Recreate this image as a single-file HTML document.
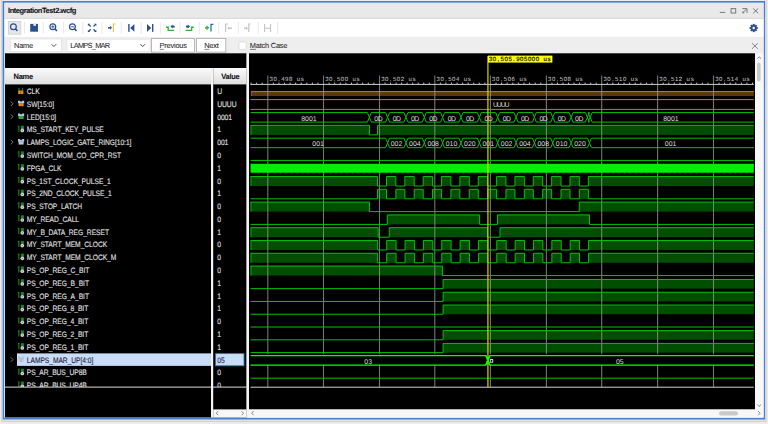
<!DOCTYPE html>
<html><head><meta charset="utf-8">
<style>
html,body{margin:0;padding:0;width:768px;height:424px;overflow:hidden;background:#d9d9d9;}
svg{position:absolute;left:0;top:0;}
text{font-family:"Liberation Sans",sans-serif;text-rendering:geometricPrecision;}
.nt{font-size:7.85px;letter-spacing:-0.05px;}
.wt{font-family:"Liberation Sans",sans-serif;font-size:6.9px;fill:#dcdcdc;}
.tl{font-family:"Liberation Sans",sans-serif;font-size:6px;fill:#d0d0d0;}
.us{font-size:5.4px;}
.ui{font-size:7.4px;fill:#2c2c2c;letter-spacing:-0.2px;stroke:#2c2c2c;stroke-width:0.08px;}
.hd{font-size:7.5px;font-weight:bold;fill:#15151f;letter-spacing:-0.32px;stroke:#15151f;stroke-width:0.1px;}
</style></head>
<body>
<svg width="768" height="424" viewBox="0 0 768 424">
<defs>
<linearGradient id="hg" x1="0" y1="0" x2="0" y2="1"><stop offset="0" stop-color="#fbfbfb"/><stop offset="1" stop-color="#dedede"/></linearGradient>
<clipPath id="nclip"><rect x="5" y="84.5" width="206" height="302.6"/></clipPath>
<clipPath id="vclip"><rect x="213" y="84.5" width="33.5" height="302.6"/></clipPath>
<clipPath id="wclip"><rect x="249" y="53" width="506" height="356.5"/></clipPath>
</defs>
<!-- outer bg strip line -->
<rect x="0" y="0" width="768" height="424" fill="#ebebeb"/>
<!-- frame -->
<path d="M1.9 0 V421.3 H766 V0" fill="none" stroke="#c6c6c6" stroke-width="0.9"/>
<rect x="3.6" y="1.95" width="760.5" height="416.65" fill="#f6f6f6" stroke="#4a80d4" stroke-width="1.9"/>
<!-- title bar -->
<rect x="4.3" y="2.7" width="759.5" height="15.8" fill="#e9e9e9"/>
<path d="M4.3 18.4 H764.3" stroke="#d2d2d2" stroke-width="0.8"/>
<text x="8" y="13.4" class="hd" style="fill:#141414;letter-spacing:-0.43px">IntegrationTest2.wcfg</text>
<!-- window controls -->
<path d="M719.8 12.4 H725.2" stroke="#7a7a7a" stroke-width="1"/>
<rect x="731.1" y="8.6" width="4.6" height="4.4" fill="none" stroke="#7a7a7a" stroke-width="1"/>
<path d="M742.4 8.6 H747 V13" fill="none" stroke="#7a7a7a" stroke-width="1"/><path d="M746.4 9.2 L743.6 12" stroke="#7a7a7a" stroke-width="1"/><path d="M742.2 13.4 L742.6 10.9 L744.7 13 Z" fill="#7a7a7a"/>
<path d="M753.2 8.5 L758.2 13.2 M758.2 8.5 L753.2 13.2" stroke="#7a7a7a" stroke-width="1"/>
<!-- toolbar -->
<rect x="4.3" y="19" width="759.5" height="17.9" fill="#ffffff"/>
<rect x="8.4" y="21.4" width="12.4" height="12.8" fill="#e6e6e6" stroke="#cacaca" stroke-width="0.7"/>
<circle cx="13.40" cy="26.80" r="2.9" fill="none" stroke="#2c4f8e" stroke-width="1.2"/><path d="M15.40 28.80 L17.50 30.90" stroke="#2c4f8e" stroke-width="1.5"/>
<path d="M24.5 22 V33.5" stroke="#e2e2e2" stroke-width="0.8"/>
<path d="M43.2 22 V33.5" stroke="#e2e2e2" stroke-width="0.8"/>
<path d="M63.6 22 V33.5" stroke="#e2e2e2" stroke-width="0.8"/>
<path d="M82.8 22 V33.5" stroke="#e2e2e2" stroke-width="0.8"/>
<path d="M102 22 V33.5" stroke="#e2e2e2" stroke-width="0.8"/>
<path d="M121.3 22 V33.5" stroke="#e2e2e2" stroke-width="0.8"/>
<path d="M141.1 22 V33.5" stroke="#e2e2e2" stroke-width="0.8"/>
<path d="M160.3 22 V33.5" stroke="#e2e2e2" stroke-width="0.8"/>
<path d="M180.1 22 V33.5" stroke="#e2e2e2" stroke-width="0.8"/>
<path d="M199.4 22 V33.5" stroke="#e2e2e2" stroke-width="0.8"/>
<path d="M218.7 22 V33.5" stroke="#e2e2e2" stroke-width="0.8"/>
<path d="M238.4 22 V33.5" stroke="#e2e2e2" stroke-width="0.8"/>
<path d="M258.2 22 V33.5" stroke="#e2e2e2" stroke-width="0.8"/>
<path d="M277.5 22 V33.5" stroke="#e2e2e2" stroke-width="0.8"/>
<path d="M30.2 23.9 H38 V31.7 H30.2 Z" fill="#2c4f8e"/><rect x="33.4" y="23.9" width="2.6" height="1.9" fill="#e8ecf4"/>
<circle cx="52.80" cy="26.80" r="2.9" fill="none" stroke="#2c4f8e" stroke-width="1.2"/><path d="M54.80 28.80 L56.90 30.90" stroke="#2c4f8e" stroke-width="1.5"/><path d="M51.20 26.80 H54.40 M52.80 25.20 V28.40" stroke="#2c4f8e" stroke-width="0.9"/>
<circle cx="72.40" cy="26.80" r="2.9" fill="none" stroke="#2c4f8e" stroke-width="1.2"/><path d="M74.40 28.80 L76.50 30.90" stroke="#2c4f8e" stroke-width="1.5"/><path d="M70.80 26.80 H74.00" stroke="#2c4f8e" stroke-width="0.9"/>
<path d="M88.3 24.099999999999998 l2.4 2.4 M95.89999999999999 24.099999999999998 l-2.4 2.4 M88.3 31.7 l2.4 -2.4 M95.89999999999999 31.7 l-2.4 -2.4" stroke="#2c4f8e" stroke-width="1.3"/><path d="M87.89999999999999 23.7 h2.2 l-2.2 2.2 z M96.3 23.7 h-2.2 l2.2 2.2 z M87.89999999999999 32.1 h2.2 l-2.2 -2.2 z M96.3 32.1 h-2.2 l2.2 -2.2 z" fill="#2c4f8e"/>
<path d="M108 27.8 H110.6" stroke="#2c4f8e" stroke-width="1.6"/><path d="M110.2 25.8 L112 27.8 L110.2 29.8 Z" fill="#2c4f8e"/><path d="M115.6 24 H113.4 V32" fill="none" stroke="#e8c840" stroke-width="1.2"/>
<rect x="128.2" y="24" width="1.4" height="7.8" fill="#2c4f8e"/><path d="M134.4 24 V31.8 L130.2 27.9 Z" fill="#2c4f8e"/>
<rect x="152" y="24" width="1.4" height="7.8" fill="#2c4f8e"/><path d="M147 24 V31.8 L151.2 27.9 Z" fill="#2c4f8e"/>
<path d="M166 27.2 H168.2 V30.4 H174.2" fill="none" stroke="#33b533" stroke-width="1.4"/><path d="M172 26.6 H174.6" stroke="#2c4f8e" stroke-width="2"/><path d="M172.6 24.6 L170.4 26.6 L172.6 28.6 Z" fill="#2c4f8e"/>
<path d="M185.6 30.4 H191.6 V27.2 H193.8" fill="none" stroke="#33b533" stroke-width="1.4"/><path d="M186 26.6 H188.4" stroke="#2c4f8e" stroke-width="2"/><path d="M187.8 24.6 L190 26.6 L187.8 28.6 Z" fill="#2c4f8e"/>
<path d="M205 27.8 H209 M207 25.8 V29.8" stroke="#33b533" stroke-width="1.4"/><path d="M213.4 24.4 H211 V31.6" fill="none" stroke="#2d6ab5" stroke-width="1.3"/>
<path d="M228 24 H225.6 V32" fill="none" stroke="#c4c4c4" stroke-width="1.2"/><path d="M228.4 28.2 H232" stroke="#c4c4c4" stroke-width="1.4"/><path d="M229.2 26.4 L227.4 28.2 L229.2 30 Z" fill="#c4c4c4"/>
<path d="M244 28.2 H246.6" stroke="#c4c4c4" stroke-width="1.4"/><path d="M246.2 26.4 L248 28.2 L246.2 30 Z" fill="#c4c4c4"/><path d="M250.6 24 H248.8 V32" fill="none" stroke="#c4c4c4" stroke-width="1.2"/>
<path d="M264.6 24 V32 M270.6 24 V32 M264.6 28.2 H270.6" fill="none" stroke="#c4c4c4" stroke-width="1.1"/>
<rect x="752.70" y="23.90" width="2" height="2.2" fill="#2c4f8e" transform="rotate(0 753.7 28)"/><rect x="752.70" y="23.90" width="2" height="2.2" fill="#2c4f8e" transform="rotate(45 753.7 28)"/><rect x="752.70" y="23.90" width="2" height="2.2" fill="#2c4f8e" transform="rotate(90 753.7 28)"/><rect x="752.70" y="23.90" width="2" height="2.2" fill="#2c4f8e" transform="rotate(135 753.7 28)"/><rect x="752.70" y="23.90" width="2" height="2.2" fill="#2c4f8e" transform="rotate(180 753.7 28)"/><rect x="752.70" y="23.90" width="2" height="2.2" fill="#2c4f8e" transform="rotate(225 753.7 28)"/><rect x="752.70" y="23.90" width="2" height="2.2" fill="#2c4f8e" transform="rotate(270 753.7 28)"/><rect x="752.70" y="23.90" width="2" height="2.2" fill="#2c4f8e" transform="rotate(315 753.7 28)"/><circle cx="753.7" cy="28" r="2.9" fill="#2c4f8e"/><circle cx="753.7" cy="28" r="1.2" fill="#fff"/>
<!-- search row -->
<rect x="4.3" y="36.9" width="759.5" height="16.4" fill="#eeeeee"/>
<rect x="10.2" y="39" width="51" height="12.6" fill="#fff" stroke="#dcdcdc" stroke-width="0.6"/>
<text x="14" y="48" class="ui">Name</text>
<path d="M51.6 44.2 L53.9 46.6 L56.2 44.2" fill="none" stroke="#505050" stroke-width="1"/>
<rect x="67" y="39.2" width="83" height="12.4" fill="#fff" stroke="#dcdcdc" stroke-width="0.6"/>
<text x="70.3" y="48" class="ui" style="letter-spacing:-0.72px">LAMPS_MAR</text>
<path d="M140.4 44.2 L142.7 46.6 L145 44.2" fill="none" stroke="#505050" stroke-width="1"/>
<rect x="151.5" y="38.5" width="43" height="13.6" fill="#fff" stroke="#a8a8a8" stroke-width="0.8"/>
<text x="159.6" y="48" class="ui">Previous</text><path d="M159.8 49.4 H163.8" stroke="#3a3a3a" stroke-width="0.6"/>
<rect x="196.4" y="38.5" width="29.4" height="13.6" fill="#fff" stroke="#a8a8a8" stroke-width="0.8"/>
<text x="204.2" y="48" class="ui">Next</text><path d="M204.4 49.4 H209.4" stroke="#3a3a3a" stroke-width="0.6"/>
<rect x="239" y="42" width="7.2" height="7.4" rx="0.8" fill="#fff" stroke="#cfcfcf" stroke-width="0.6"/>
<text x="249.8" y="48" class="ui">Match Case</text><path d="M250 49.4 H256" stroke="#3a3a3a" stroke-width="0.6"/>
<path d="M752 43.2 L757.8 48.8 M757.8 43.2 L752 48.8" stroke="#7a7a7a" stroke-width="0.9"/>
<!-- main area -->
<rect x="4.3" y="53.3" width="759.5" height="364.2" fill="#eaeaea"/>
<rect x="5" y="53.3" width="241.6" height="364.2" fill="#000"/>
<rect x="246.6" y="53.3" width="2.4" height="364.2" fill="#f4f4f4"/>
<rect x="211" y="68" width="2.2" height="349.5" fill="#f4f4f4"/>
<rect x="5" y="68" width="206" height="16.4" fill="url(#hg)"/>
<rect x="213.2" y="68" width="33.4" height="16.4" fill="url(#hg)"/>
<text x="13.6" y="79" class="hd">Name</text>
<text x="221.3" y="79" class="hd">Value</text>
<rect x="213.2" y="409.4" width="33.4" height="8.1" fill="#f7f7f7"/>
<path d="M218.2 411.2 L216.2 413.2 L218.2 415.2 M241.6 411.2 L243.6 413.2 L241.6 415.2" fill="none" stroke="#777" stroke-width="0.9"/>
<rect x="249" y="53.3" width="506" height="356.2" fill="#000"/>
<rect x="755" y="53.3" width="8.3" height="364.2" fill="#f8f8f8"/>
<rect x="249" y="409.5" width="506" height="8" fill="#f7f7f7"/>
<rect x="757" y="62.6" width="3.6" height="19" rx="1.8" fill="#c9c9c9"/>
<rect x="719" y="411.3" width="19" height="4.3" rx="2.1" fill="#c9c9c9"/>
<path d="M757.4 58.6 L759.2 56.8 L761 58.6 M757.4 404.6 L759.2 406.4 L761 404.6 M758.2 411.2 L760.2 413.2 L758.2 415.2 M253.6 411.2 L251.6 413.2 L253.6 415.2" fill="none" stroke="#777" stroke-width="0.9"/>
<g clip-path="url(#nclip)">
<path d="M19 87.80 v2.6 M22.6 87.80 v2.6" stroke="#2aa82a" stroke-width="0.9"/><rect x="18.2" y="90.40" width="5.2" height="3.6" fill="#e08a18"/><rect x="20.6" y="90.60" width="0.5" height="3" fill="#7a4a10"/>
<text transform="matrix(0.852 0 0 1 26.8 94.00)" class="nt" fill="#e4e4e4" stroke="#e4e4e4" stroke-width="0.1">CLK</text>
<path d="M10.8 101.59 L13 103.79 L10.8 105.99" fill="none" stroke="#9a9a9a" stroke-width="0.8"/>
<path d="M18 100.69 H19.6 L21.1 101.79 L22.6 100.69 H24.2 V103.29 H18 Z" fill="#a9c9e4"/><rect x="18.6" y="103.09" width="5" height="3.1" fill="#e8921a"/><rect x="20.9" y="103.29" width="0.45" height="2.8" fill="#00000055"/>
<text transform="matrix(0.852 0 0 1 26.8 106.79)" class="nt" fill="#e4e4e4" stroke="#e4e4e4" stroke-width="0.1">SW[15:0]</text>
<path d="M10.8 114.38 L13 116.58 L10.8 118.78" fill="none" stroke="#9a9a9a" stroke-width="0.8"/>
<path d="M18 113.48 H19.6 L21.1 114.58 L22.6 113.48 H24.2 V116.08 H18 Z" fill="#a9c9e4"/><rect x="18.6" y="115.88" width="5" height="3.1" fill="#3aae3a"/><rect x="20.9" y="116.08" width="0.45" height="2.8" fill="#00000055"/>
<text transform="matrix(0.852 0 0 1 26.8 119.58)" class="nt" fill="#e4e4e4" stroke="#e4e4e4" stroke-width="0.1">LED[15:0]</text>
<path d="M18.1 126.67 L18.9 125.77 V131.77" stroke="#2aa82a" stroke-width="0.9" fill="none"/><rect x="20.9" y="125.77" width="3" height="3.2" fill="#237f23"/><circle cx="22.3" cy="130.47" r="1.85" fill="#d4d4d4"/><circle cx="22.3" cy="130.47" r="0.7" fill="#8a8a8a"/>
<text transform="matrix(0.852 0 0 1 26.8 132.37)" class="nt" fill="#e4e4e4" stroke="#e4e4e4" stroke-width="0.1">MS_START_KEY_PULSE</text>
<path d="M10.8 139.96 L13 142.16 L10.8 144.36" fill="none" stroke="#9a9a9a" stroke-width="0.8"/>
<path d="M18 139.06 H19.6 L21.1 140.16 L22.6 139.06 H24.2 V141.66 H18 Z" fill="#a9c9e4"/><rect x="18.6" y="141.46" width="5" height="3.1" fill="#c8ccd8"/><rect x="20.9" y="141.66" width="0.45" height="2.8" fill="#00000055"/>
<text transform="matrix(0.852 0 0 1 26.8 145.16)" class="nt" fill="#e4e4e4" stroke="#e4e4e4" stroke-width="0.1">LAMPS_LOGIC_GATE_RING[10:1]</text>
<path d="M18.1 152.25 L18.9 151.35 V157.35" stroke="#2aa82a" stroke-width="0.9" fill="none"/><rect x="20.9" y="151.35" width="3" height="3.2" fill="#237f23"/><circle cx="22.3" cy="156.05" r="1.85" fill="#d4d4d4"/><circle cx="22.3" cy="156.05" r="0.7" fill="#8a8a8a"/>
<text transform="matrix(0.852 0 0 1 26.8 157.95)" class="nt" fill="#e4e4e4" stroke="#e4e4e4" stroke-width="0.1">SWITCH_MOM_CO_CPR_RST</text>
<path d="M18.1 165.04 L18.9 164.14 V170.14" stroke="#2aa82a" stroke-width="0.9" fill="none"/><rect x="20.9" y="164.14" width="3" height="3.2" fill="#237f23"/><circle cx="22.3" cy="168.84" r="1.85" fill="#d4d4d4"/><circle cx="22.3" cy="168.84" r="0.7" fill="#8a8a8a"/>
<text transform="matrix(0.852 0 0 1 26.8 170.74)" class="nt" fill="#e4e4e4" stroke="#e4e4e4" stroke-width="0.1">FPGA_CLK</text>
<path d="M18.1 177.83 L18.9 176.93 V182.93" stroke="#2aa82a" stroke-width="0.9" fill="none"/><rect x="20.9" y="176.93" width="3" height="3.2" fill="#237f23"/><circle cx="22.3" cy="181.63" r="1.85" fill="#d4d4d4"/><circle cx="22.3" cy="181.63" r="0.7" fill="#8a8a8a"/>
<text transform="matrix(0.852 0 0 1 26.8 183.53)" class="nt" fill="#e4e4e4" stroke="#e4e4e4" stroke-width="0.1">PS_1ST_CLOCK_PULSE_1</text>
<path d="M18.1 190.62 L18.9 189.72 V195.72" stroke="#2aa82a" stroke-width="0.9" fill="none"/><rect x="20.9" y="189.72" width="3" height="3.2" fill="#237f23"/><circle cx="22.3" cy="194.42" r="1.85" fill="#d4d4d4"/><circle cx="22.3" cy="194.42" r="0.7" fill="#8a8a8a"/>
<text transform="matrix(0.852 0 0 1 26.8 196.32)" class="nt" fill="#e4e4e4" stroke="#e4e4e4" stroke-width="0.1">PS_2ND_CLOCK_PULSE_1</text>
<path d="M18.1 203.41 L18.9 202.51 V208.51" stroke="#2aa82a" stroke-width="0.9" fill="none"/><rect x="20.9" y="202.51" width="3" height="3.2" fill="#237f23"/><circle cx="22.3" cy="207.21" r="1.85" fill="#d4d4d4"/><circle cx="22.3" cy="207.21" r="0.7" fill="#8a8a8a"/>
<text transform="matrix(0.852 0 0 1 26.8 209.11)" class="nt" fill="#e4e4e4" stroke="#e4e4e4" stroke-width="0.1">PS_STOP_LATCH</text>
<path d="M18.1 216.20 L18.9 215.30 V221.30" stroke="#2aa82a" stroke-width="0.9" fill="none"/><rect x="20.9" y="215.30" width="3" height="3.2" fill="#237f23"/><circle cx="22.3" cy="220.00" r="1.85" fill="#d4d4d4"/><circle cx="22.3" cy="220.00" r="0.7" fill="#8a8a8a"/>
<text transform="matrix(0.852 0 0 1 26.8 221.90)" class="nt" fill="#e4e4e4" stroke="#e4e4e4" stroke-width="0.1">MY_READ_CALL</text>
<path d="M18.1 228.99 L18.9 228.09 V234.09" stroke="#2aa82a" stroke-width="0.9" fill="none"/><rect x="20.9" y="228.09" width="3" height="3.2" fill="#237f23"/><circle cx="22.3" cy="232.79" r="1.85" fill="#d4d4d4"/><circle cx="22.3" cy="232.79" r="0.7" fill="#8a8a8a"/>
<text transform="matrix(0.852 0 0 1 26.8 234.69)" class="nt" fill="#e4e4e4" stroke="#e4e4e4" stroke-width="0.1">MY_B_DATA_REG_RESET</text>
<path d="M18.1 241.78 L18.9 240.88 V246.88" stroke="#2aa82a" stroke-width="0.9" fill="none"/><rect x="20.9" y="240.88" width="3" height="3.2" fill="#237f23"/><circle cx="22.3" cy="245.58" r="1.85" fill="#d4d4d4"/><circle cx="22.3" cy="245.58" r="0.7" fill="#8a8a8a"/>
<text transform="matrix(0.852 0 0 1 26.8 247.48)" class="nt" fill="#e4e4e4" stroke="#e4e4e4" stroke-width="0.1">MY_START_MEM_CLOCK</text>
<path d="M18.1 254.57 L18.9 253.67 V259.67" stroke="#2aa82a" stroke-width="0.9" fill="none"/><rect x="20.9" y="253.67" width="3" height="3.2" fill="#237f23"/><circle cx="22.3" cy="258.37" r="1.85" fill="#d4d4d4"/><circle cx="22.3" cy="258.37" r="0.7" fill="#8a8a8a"/>
<text transform="matrix(0.852 0 0 1 26.8 260.27)" class="nt" fill="#e4e4e4" stroke="#e4e4e4" stroke-width="0.1">MY_START_MEM_CLOCK_M</text>
<path d="M18.1 267.36 L18.9 266.46 V272.46" stroke="#2aa82a" stroke-width="0.9" fill="none"/><rect x="20.9" y="266.46" width="3" height="3.2" fill="#237f23"/><circle cx="22.3" cy="271.16" r="1.85" fill="#d4d4d4"/><circle cx="22.3" cy="271.16" r="0.7" fill="#8a8a8a"/>
<text transform="matrix(0.852 0 0 1 26.8 273.06)" class="nt" fill="#e4e4e4" stroke="#e4e4e4" stroke-width="0.1">PS_OP_REG_C_BIT</text>
<path d="M18.1 280.15 L18.9 279.25 V285.25" stroke="#2aa82a" stroke-width="0.9" fill="none"/><rect x="20.9" y="279.25" width="3" height="3.2" fill="#237f23"/><circle cx="22.3" cy="283.95" r="1.85" fill="#d4d4d4"/><circle cx="22.3" cy="283.95" r="0.7" fill="#8a8a8a"/>
<text transform="matrix(0.852 0 0 1 26.8 285.85)" class="nt" fill="#e4e4e4" stroke="#e4e4e4" stroke-width="0.1">PS_OP_REG_B_BIT</text>
<path d="M18.1 292.94 L18.9 292.04 V298.04" stroke="#2aa82a" stroke-width="0.9" fill="none"/><rect x="20.9" y="292.04" width="3" height="3.2" fill="#237f23"/><circle cx="22.3" cy="296.74" r="1.85" fill="#d4d4d4"/><circle cx="22.3" cy="296.74" r="0.7" fill="#8a8a8a"/>
<text transform="matrix(0.852 0 0 1 26.8 298.64)" class="nt" fill="#e4e4e4" stroke="#e4e4e4" stroke-width="0.1">PS_OP_REG_A_BIT</text>
<path d="M18.1 305.73 L18.9 304.83 V310.83" stroke="#2aa82a" stroke-width="0.9" fill="none"/><rect x="20.9" y="304.83" width="3" height="3.2" fill="#237f23"/><circle cx="22.3" cy="309.53" r="1.85" fill="#d4d4d4"/><circle cx="22.3" cy="309.53" r="0.7" fill="#8a8a8a"/>
<text transform="matrix(0.852 0 0 1 26.8 311.43)" class="nt" fill="#e4e4e4" stroke="#e4e4e4" stroke-width="0.1">PS_OP_REG_8_BIT</text>
<path d="M18.1 318.52 L18.9 317.62 V323.62" stroke="#2aa82a" stroke-width="0.9" fill="none"/><rect x="20.9" y="317.62" width="3" height="3.2" fill="#237f23"/><circle cx="22.3" cy="322.32" r="1.85" fill="#d4d4d4"/><circle cx="22.3" cy="322.32" r="0.7" fill="#8a8a8a"/>
<text transform="matrix(0.852 0 0 1 26.8 324.22)" class="nt" fill="#e4e4e4" stroke="#e4e4e4" stroke-width="0.1">PS_OP_REG_4_BIT</text>
<path d="M18.1 331.31 L18.9 330.41 V336.41" stroke="#2aa82a" stroke-width="0.9" fill="none"/><rect x="20.9" y="330.41" width="3" height="3.2" fill="#237f23"/><circle cx="22.3" cy="335.11" r="1.85" fill="#d4d4d4"/><circle cx="22.3" cy="335.11" r="0.7" fill="#8a8a8a"/>
<text transform="matrix(0.852 0 0 1 26.8 337.01)" class="nt" fill="#e4e4e4" stroke="#e4e4e4" stroke-width="0.1">PS_OP_REG_2_BIT</text>
<path d="M18.1 344.10 L18.9 343.20 V349.20" stroke="#2aa82a" stroke-width="0.9" fill="none"/><rect x="20.9" y="343.20" width="3" height="3.2" fill="#237f23"/><circle cx="22.3" cy="347.90" r="1.85" fill="#d4d4d4"/><circle cx="22.3" cy="347.90" r="0.7" fill="#8a8a8a"/>
<text transform="matrix(0.852 0 0 1 26.8 349.80)" class="nt" fill="#e4e4e4" stroke="#e4e4e4" stroke-width="0.1">PS_OP_REG_1_BIT</text>
<rect x="17" y="353.39" width="194" height="12.49" fill="#c9dcf8"/>
<path d="M10.8 357.39 L13 359.59 L10.8 361.79" fill="none" stroke="#9a9a9a" stroke-width="0.8"/>
<path d="M18 356.49 H19.6 L21.1 357.59 L22.6 356.49 H24.2 V359.09 H18 Z" fill="#a9c9e4"/><rect x="18.6" y="358.89" width="5" height="3.1" fill="#c8ccd8"/><rect x="20.9" y="359.09" width="0.45" height="2.8" fill="#00000055"/>
<text transform="matrix(0.852 0 0 1 26.8 362.59)" class="nt" fill="#1c1c3c" stroke="#1c1c3c" stroke-width="0.1">LAMPS_MAR_UP[4:0]</text>
<path d="M18.1 369.68 L18.9 368.78 V374.78" stroke="#2aa82a" stroke-width="0.9" fill="none"/><rect x="20.9" y="368.78" width="3" height="3.2" fill="#237f23"/><circle cx="22.3" cy="373.48" r="1.85" fill="#d4d4d4"/><circle cx="22.3" cy="373.48" r="0.7" fill="#8a8a8a"/>
<text transform="matrix(0.852 0 0 1 26.8 375.38)" class="nt" fill="#e4e4e4" stroke="#e4e4e4" stroke-width="0.1">PS_AR_BUS_UP8B</text>
<path d="M18.1 382.47 L18.9 381.57 V387.57" stroke="#2aa82a" stroke-width="0.9" fill="none"/><rect x="20.9" y="381.57" width="3" height="3.2" fill="#237f23"/><circle cx="22.3" cy="386.27" r="1.85" fill="#d4d4d4"/><circle cx="22.3" cy="386.27" r="0.7" fill="#8a8a8a"/>
<text transform="matrix(0.852 0 0 1 26.8 388.17)" class="nt" fill="#e4e4e4" stroke="#e4e4e4" stroke-width="0.1">PS_AR_BUS_UP4B</text>
</g>
<path d="M5 387.1 H211 M213.2 387.1 H246.6" stroke="#dcdcdc" stroke-width="1"/>
<rect x="213.2" y="387.6" width="33.4" height="0" fill="#000"/>
<g clip-path="url(#vclip)">
<text transform="matrix(0.86 0 0 1 217.2 94.00)" class="nt" fill="#e4e4e4" stroke="#e4e4e4" stroke-width="0.1">U</text>
<text transform="matrix(0.86 0 0 1 217.2 106.79)" class="nt" fill="#e4e4e4" stroke="#e4e4e4" stroke-width="0.1">UUUU</text>
<text transform="matrix(0.86 0 0 1 217.2 119.58)" class="nt" fill="#e4e4e4" stroke="#e4e4e4" stroke-width="0.1">0001</text>
<text transform="matrix(0.86 0 0 1 217.2 132.37)" class="nt" fill="#e4e4e4" stroke="#e4e4e4" stroke-width="0.1">1</text>
<text transform="matrix(0.86 0 0 1 217.2 145.16)" class="nt" fill="#e4e4e4" stroke="#e4e4e4" stroke-width="0.1">001</text>
<text transform="matrix(0.86 0 0 1 217.2 157.95)" class="nt" fill="#e4e4e4" stroke="#e4e4e4" stroke-width="0.1">0</text>
<text transform="matrix(0.86 0 0 1 217.2 170.74)" class="nt" fill="#e4e4e4" stroke="#e4e4e4" stroke-width="0.1">1</text>
<text transform="matrix(0.86 0 0 1 217.2 183.53)" class="nt" fill="#e4e4e4" stroke="#e4e4e4" stroke-width="0.1">0</text>
<text transform="matrix(0.86 0 0 1 217.2 196.32)" class="nt" fill="#e4e4e4" stroke="#e4e4e4" stroke-width="0.1">1</text>
<text transform="matrix(0.86 0 0 1 217.2 209.11)" class="nt" fill="#e4e4e4" stroke="#e4e4e4" stroke-width="0.1">0</text>
<text transform="matrix(0.86 0 0 1 217.2 221.90)" class="nt" fill="#e4e4e4" stroke="#e4e4e4" stroke-width="0.1">0</text>
<text transform="matrix(0.86 0 0 1 217.2 234.69)" class="nt" fill="#e4e4e4" stroke="#e4e4e4" stroke-width="0.1">1</text>
<text transform="matrix(0.86 0 0 1 217.2 247.48)" class="nt" fill="#e4e4e4" stroke="#e4e4e4" stroke-width="0.1">0</text>
<text transform="matrix(0.86 0 0 1 217.2 260.27)" class="nt" fill="#e4e4e4" stroke="#e4e4e4" stroke-width="0.1">0</text>
<text transform="matrix(0.86 0 0 1 217.2 273.06)" class="nt" fill="#e4e4e4" stroke="#e4e4e4" stroke-width="0.1">0</text>
<text transform="matrix(0.86 0 0 1 217.2 285.85)" class="nt" fill="#e4e4e4" stroke="#e4e4e4" stroke-width="0.1">1</text>
<text transform="matrix(0.86 0 0 1 217.2 298.64)" class="nt" fill="#e4e4e4" stroke="#e4e4e4" stroke-width="0.1">1</text>
<text transform="matrix(0.86 0 0 1 217.2 311.43)" class="nt" fill="#e4e4e4" stroke="#e4e4e4" stroke-width="0.1">1</text>
<text transform="matrix(0.86 0 0 1 217.2 324.22)" class="nt" fill="#e4e4e4" stroke="#e4e4e4" stroke-width="0.1">0</text>
<text transform="matrix(0.86 0 0 1 217.2 337.01)" class="nt" fill="#e4e4e4" stroke="#e4e4e4" stroke-width="0.1">1</text>
<text transform="matrix(0.86 0 0 1 217.2 349.80)" class="nt" fill="#e4e4e4" stroke="#e4e4e4" stroke-width="0.1">1</text>
<rect x="215.6" y="353.59" width="28.4" height="12.19" fill="#c9dcf8" stroke="#3d6fc4" stroke-width="0.9"/>
<text transform="matrix(0.86 0 0 1 217.2 362.59)" class="nt" fill="#1c1c3c" stroke="#1c1c3c" stroke-width="0.1">05</text>
<text transform="matrix(0.86 0 0 1 217.2 375.38)" class="nt" fill="#e4e4e4" stroke="#e4e4e4" stroke-width="0.1">0</text>
<text transform="matrix(0.86 0 0 1 217.2 388.17)" class="nt" fill="#e4e4e4" stroke="#e4e4e4" stroke-width="0.1">0</text>
</g>
<g clip-path="url(#wclip)">
<rect x="251.00" y="91.6" width="502.80" height="4.4" fill="#573a0a"/>
<rect x="250.50" y="125.37" width="118.90" height="9.50" fill="#004e00"/>
<rect x="377.50" y="125.37" width="376.30" height="9.50" fill="#004e00"/>
<rect x="250.50" y="176.53" width="127.00" height="9.50" fill="#004e00"/>
<rect x="386.50" y="176.53" width="9.35" height="9.50" fill="#004e00"/>
<rect x="404.85" y="176.53" width="9.35" height="9.50" fill="#004e00"/>
<rect x="423.20" y="176.53" width="9.35" height="9.50" fill="#004e00"/>
<rect x="441.55" y="176.53" width="9.35" height="9.50" fill="#004e00"/>
<rect x="459.90" y="176.53" width="9.35" height="9.50" fill="#004e00"/>
<rect x="478.25" y="176.53" width="9.35" height="9.50" fill="#004e00"/>
<rect x="496.60" y="176.53" width="9.35" height="9.50" fill="#004e00"/>
<rect x="514.95" y="176.53" width="9.35" height="9.50" fill="#004e00"/>
<rect x="533.30" y="176.53" width="9.35" height="9.50" fill="#004e00"/>
<rect x="551.65" y="176.53" width="9.35" height="9.50" fill="#004e00"/>
<rect x="570.00" y="176.53" width="9.35" height="9.50" fill="#004e00"/>
<rect x="588.35" y="176.53" width="165.45" height="9.50" fill="#004e00"/>
<rect x="377.50" y="189.32" width="9.00" height="9.50" fill="#004e00"/>
<rect x="395.85" y="189.32" width="9.00" height="9.50" fill="#004e00"/>
<rect x="414.20" y="189.32" width="9.00" height="9.50" fill="#004e00"/>
<rect x="432.55" y="189.32" width="9.00" height="9.50" fill="#004e00"/>
<rect x="450.90" y="189.32" width="9.00" height="9.50" fill="#004e00"/>
<rect x="469.25" y="189.32" width="9.00" height="9.50" fill="#004e00"/>
<rect x="487.60" y="189.32" width="9.00" height="9.50" fill="#004e00"/>
<rect x="505.95" y="189.32" width="9.00" height="9.50" fill="#004e00"/>
<rect x="524.30" y="189.32" width="9.00" height="9.50" fill="#004e00"/>
<rect x="542.65" y="189.32" width="9.00" height="9.50" fill="#004e00"/>
<rect x="561.00" y="189.32" width="9.00" height="9.50" fill="#004e00"/>
<rect x="579.35" y="189.32" width="9.00" height="9.50" fill="#004e00"/>
<rect x="250.50" y="202.11" width="118.90" height="9.50" fill="#004e00"/>
<rect x="579.30" y="202.11" width="174.50" height="9.50" fill="#004e00"/>
<rect x="387.30" y="214.90" width="92.30" height="9.50" fill="#004e00"/>
<rect x="497.50" y="214.90" width="92.00" height="9.50" fill="#004e00"/>
<rect x="250.50" y="227.69" width="127.70" height="9.50" fill="#004e00"/>
<rect x="389.30" y="227.69" width="98.20" height="9.50" fill="#004e00"/>
<rect x="500.00" y="227.69" width="253.80" height="9.50" fill="#004e00"/>
<rect x="250.50" y="240.48" width="127.20" height="9.50" fill="#004e00"/>
<rect x="386.70" y="240.48" width="9.35" height="9.50" fill="#004e00"/>
<rect x="405.05" y="240.48" width="9.35" height="9.50" fill="#004e00"/>
<rect x="423.40" y="240.48" width="9.35" height="9.50" fill="#004e00"/>
<rect x="441.75" y="240.48" width="9.35" height="9.50" fill="#004e00"/>
<rect x="460.10" y="240.48" width="9.35" height="9.50" fill="#004e00"/>
<rect x="478.45" y="240.48" width="9.35" height="9.50" fill="#004e00"/>
<rect x="496.80" y="240.48" width="9.35" height="9.50" fill="#004e00"/>
<rect x="515.15" y="240.48" width="9.35" height="9.50" fill="#004e00"/>
<rect x="533.50" y="240.48" width="9.35" height="9.50" fill="#004e00"/>
<rect x="551.85" y="240.48" width="9.35" height="9.50" fill="#004e00"/>
<rect x="570.20" y="240.48" width="9.35" height="9.50" fill="#004e00"/>
<rect x="588.55" y="240.48" width="165.25" height="9.50" fill="#004e00"/>
<rect x="250.50" y="253.27" width="127.20" height="9.50" fill="#004e00"/>
<rect x="386.70" y="253.27" width="9.35" height="9.50" fill="#004e00"/>
<rect x="405.05" y="253.27" width="9.35" height="9.50" fill="#004e00"/>
<rect x="423.40" y="253.27" width="9.35" height="9.50" fill="#004e00"/>
<rect x="441.75" y="253.27" width="9.35" height="9.50" fill="#004e00"/>
<rect x="460.10" y="253.27" width="9.35" height="9.50" fill="#004e00"/>
<rect x="478.45" y="253.27" width="9.35" height="9.50" fill="#004e00"/>
<rect x="496.80" y="253.27" width="9.35" height="9.50" fill="#004e00"/>
<rect x="515.15" y="253.27" width="9.35" height="9.50" fill="#004e00"/>
<rect x="533.50" y="253.27" width="9.35" height="9.50" fill="#004e00"/>
<rect x="551.85" y="253.27" width="9.35" height="9.50" fill="#004e00"/>
<rect x="570.20" y="253.27" width="9.35" height="9.50" fill="#004e00"/>
<rect x="588.55" y="253.27" width="165.25" height="9.50" fill="#004e00"/>
<rect x="250.50" y="266.06" width="191.90" height="9.50" fill="#004e00"/>
<rect x="443.10" y="279.45" width="310.70" height="9.20" fill="#004e00"/>
<rect x="443.10" y="292.24" width="310.70" height="9.20" fill="#004e00"/>
<rect x="443.10" y="305.03" width="310.70" height="9.20" fill="#004e00"/>
<rect x="443.10" y="330.61" width="310.70" height="9.20" fill="#004e00"/>
<rect x="443.10" y="343.40" width="310.70" height="9.20" fill="#004e00"/>
<path d="M267.80 75.4 V387.2" stroke="#9a9a9a" stroke-width="1.1" opacity="0.75"/>
<path d="M323.50 75.4 V387.2" stroke="#9a9a9a" stroke-width="1.1" opacity="0.75"/>
<path d="M379.50 75.4 V387.2" stroke="#9a9a9a" stroke-width="1.1" opacity="0.75"/>
<path d="M434.80 75.4 V387.2" stroke="#9a9a9a" stroke-width="1.1" opacity="0.75"/>
<path d="M490.40 75.4 V387.2" stroke="#9a9a9a" stroke-width="1.1" opacity="0.75"/>
<path d="M546.40 75.4 V387.2" stroke="#9a9a9a" stroke-width="1.1" opacity="0.75"/>
<path d="M601.70 75.4 V387.2" stroke="#9a9a9a" stroke-width="1.1" opacity="0.75"/>
<path d="M657.60 75.4 V387.2" stroke="#9a9a9a" stroke-width="1.1" opacity="0.75"/>
<path d="M713.50 75.4 V387.2" stroke="#9a9a9a" stroke-width="1.1" opacity="0.75"/>
<path d="M251.00 91.6 H753.80" stroke="#d07e10" stroke-width="1"/>
<path d="M251.30 91.6 V96" stroke="#a86a10" stroke-width="0.7"/>
<path d="M250.50 99.6 H753.80 M250.50 109.4 H753.80" stroke="#c87c10" stroke-width="1"/>
<text x="495.43 499.27 503.12 506.98" y="107.40" class="wt" text-anchor="middle">UUUU</text>
<path d="M250.50 112.58 H367.40 L369.40 117.33 L367.40 122.08 H250.50 M369.40 117.33 L371.40 112.58 H385.60 L387.60 117.33 L385.60 122.08 H371.40 L369.40 117.33 M387.60 117.33 L389.60 112.58 H403.95 L405.95 117.33 L403.95 122.08 H389.60 L387.60 117.33 M405.95 117.33 L407.95 112.58 H422.30 L424.30 117.33 L422.30 122.08 H407.95 L405.95 117.33 M424.30 117.33 L426.30 112.58 H440.65 L442.65 117.33 L440.65 122.08 H426.30 L424.30 117.33 M442.65 117.33 L444.65 112.58 H459.00 L461.00 117.33 L459.00 122.08 H444.65 L442.65 117.33 M461.00 117.33 L463.00 112.58 H477.35 L479.35 117.33 L477.35 122.08 H463.00 L461.00 117.33 M479.35 117.33 L481.35 112.58 H495.70 L497.70 117.33 L495.70 122.08 H481.35 L479.35 117.33 M497.70 117.33 L499.70 112.58 H514.05 L516.05 117.33 L514.05 122.08 H499.70 L497.70 117.33 M516.05 117.33 L518.05 112.58 H532.40 L534.40 117.33 L532.40 122.08 H518.05 L516.05 117.33 M534.40 117.33 L536.40 112.58 H550.75 L552.75 117.33 L550.75 122.08 H536.40 L534.40 117.33 M552.75 117.33 L554.75 112.58 H569.10 L571.10 117.33 L569.10 122.08 H554.75 L552.75 117.33 M571.10 117.33 L573.10 112.58 H585.40 L587.40 117.33 L585.40 122.08 H573.10 L571.10 117.33 M587.40 117.33 L589.40 112.58 H588.10 L590.10 117.33 L588.10 122.08 H589.40 L587.40 117.33 M590.10 117.33 L592.10 112.58 H753.80 M753.80 122.08 H592.10 L590.10 117.33" fill="none" stroke="#00c400" stroke-width="1.0"/>
<text x="303.18 307.02 310.88 314.73" y="120.53" class="wt" text-anchor="middle">8001</text>
<text x="376.27 380.12" y="120.53" class="wt" text-anchor="middle">0D</text>
<text x="394.55 398.40" y="120.53" class="wt" text-anchor="middle">0D</text>
<text x="412.90 416.75" y="120.53" class="wt" text-anchor="middle">0D</text>
<text x="431.25 435.10" y="120.53" class="wt" text-anchor="middle">0D</text>
<text x="449.60 453.45" y="120.53" class="wt" text-anchor="middle">0D</text>
<text x="467.95 471.80" y="120.53" class="wt" text-anchor="middle">0D</text>
<text x="486.30 490.15" y="120.53" class="wt" text-anchor="middle">0D</text>
<text x="504.65 508.50" y="120.53" class="wt" text-anchor="middle">0D</text>
<text x="523.00 526.85" y="120.53" class="wt" text-anchor="middle">0D</text>
<text x="541.35 545.20" y="120.53" class="wt" text-anchor="middle">0D</text>
<text x="559.70 563.55" y="120.53" class="wt" text-anchor="middle">0D</text>
<text x="577.02 580.88" y="120.53" class="wt" text-anchor="middle">0D</text>
<text x="665.17 669.02 672.88 676.73" y="120.53" class="wt" text-anchor="middle">8001</text>
<path d="M250.50 125.37 H369.40 V134.87 H377.50 V125.37 H753.80" fill="none" stroke="#00c400" stroke-width="1.0"/>
<path d="M251.00 125.37 V134.87" stroke="#00c400" stroke-width="0.8"/>
<path d="M250.50 138.16 H385.60 L387.60 142.91 L385.60 147.66 H250.50 M387.60 142.91 L389.60 138.16 H403.95 L405.95 142.91 L403.95 147.66 H389.60 L387.60 142.91 M405.95 142.91 L407.95 138.16 H422.30 L424.30 142.91 L422.30 147.66 H407.95 L405.95 142.91 M424.30 142.91 L426.30 138.16 H440.65 L442.65 142.91 L440.65 147.66 H426.30 L424.30 142.91 M442.65 142.91 L444.65 138.16 H459.00 L461.00 142.91 L459.00 147.66 H444.65 L442.65 142.91 M461.00 142.91 L463.00 138.16 H477.35 L479.35 142.91 L477.35 147.66 H463.00 L461.00 142.91 M479.35 142.91 L481.35 138.16 H495.70 L497.70 142.91 L495.70 147.66 H481.35 L479.35 142.91 M497.70 142.91 L499.70 138.16 H514.05 L516.05 142.91 L514.05 147.66 H499.70 L497.70 142.91 M516.05 142.91 L518.05 138.16 H532.40 L534.40 142.91 L532.40 147.66 H518.05 L516.05 142.91 M534.40 142.91 L536.40 138.16 H550.75 L552.75 142.91 L550.75 147.66 H536.40 L534.40 142.91 M552.75 142.91 L554.75 138.16 H569.10 L571.10 142.91 L569.10 147.66 H554.75 L552.75 142.91 M571.10 142.91 L573.10 138.16 H587.45 L589.45 142.91 L587.45 147.66 H573.10 L571.10 142.91 M589.45 142.91 L591.45 138.16 H753.80 M753.80 147.66 H591.45 L589.45 142.91" fill="none" stroke="#00c400" stroke-width="1.0"/>
<text x="314.20 318.05 321.90" y="146.11" class="wt" text-anchor="middle">001</text>
<text x="392.63 396.48 400.33" y="146.11" class="wt" text-anchor="middle">002</text>
<text x="410.98 414.82 418.68" y="146.11" class="wt" text-anchor="middle">004</text>
<text x="429.33 433.18 437.03" y="146.11" class="wt" text-anchor="middle">008</text>
<text x="447.68 451.53 455.38" y="146.11" class="wt" text-anchor="middle">010</text>
<text x="466.03 469.88 473.73" y="146.11" class="wt" text-anchor="middle">020</text>
<text x="484.38 488.23 492.08" y="146.11" class="wt" text-anchor="middle">001</text>
<text x="502.73 506.58 510.43" y="146.11" class="wt" text-anchor="middle">002</text>
<text x="521.08 524.93 528.78" y="146.11" class="wt" text-anchor="middle">004</text>
<text x="539.43 543.28 547.13" y="146.11" class="wt" text-anchor="middle">008</text>
<text x="557.77 561.62 565.48" y="146.11" class="wt" text-anchor="middle">010</text>
<text x="576.13 579.98 583.83" y="146.11" class="wt" text-anchor="middle">020</text>
<text x="666.77 670.62 674.48" y="146.11" class="wt" text-anchor="middle">001</text>
<path d="M250.50 160.45 H753.80" fill="none" stroke="#00c400" stroke-width="1.0"/>
<rect x="250.50" y="163.74" width="503.30" height="9.0" fill="#00f000"/>
<path d="M252.70 172.74 v0.9 M258.25 172.74 v0.9 M263.80 172.74 v0.9 M269.35 172.74 v0.9 M274.90 172.74 v0.9 M280.45 172.74 v0.9 M286.00 172.74 v0.9 M291.55 172.74 v0.9 M297.10 172.74 v0.9 M302.65 172.74 v0.9 M308.20 172.74 v0.9 M313.75 172.74 v0.9 M319.30 172.74 v0.9 M324.85 172.74 v0.9 M330.40 172.74 v0.9 M335.95 172.74 v0.9 M341.50 172.74 v0.9 M347.05 172.74 v0.9 M352.60 172.74 v0.9 M358.15 172.74 v0.9 M363.70 172.74 v0.9 M369.25 172.74 v0.9 M374.80 172.74 v0.9 M380.35 172.74 v0.9 M385.90 172.74 v0.9 M391.45 172.74 v0.9 M397.00 172.74 v0.9 M402.55 172.74 v0.9 M408.10 172.74 v0.9 M413.65 172.74 v0.9 M419.20 172.74 v0.9 M424.75 172.74 v0.9 M430.30 172.74 v0.9 M435.85 172.74 v0.9 M441.40 172.74 v0.9 M446.95 172.74 v0.9 M452.50 172.74 v0.9 M458.05 172.74 v0.9 M463.60 172.74 v0.9 M469.15 172.74 v0.9 M474.70 172.74 v0.9 M480.25 172.74 v0.9 M485.80 172.74 v0.9 M491.35 172.74 v0.9 M496.90 172.74 v0.9 M502.45 172.74 v0.9 M508.00 172.74 v0.9 M513.55 172.74 v0.9 M519.10 172.74 v0.9 M524.65 172.74 v0.9 M530.20 172.74 v0.9 M535.75 172.74 v0.9 M541.30 172.74 v0.9 M546.85 172.74 v0.9 M552.40 172.74 v0.9 M557.95 172.74 v0.9 M563.50 172.74 v0.9 M569.05 172.74 v0.9 M574.60 172.74 v0.9 M580.15 172.74 v0.9 M585.70 172.74 v0.9 M591.25 172.74 v0.9 M596.80 172.74 v0.9 M602.35 172.74 v0.9 M607.90 172.74 v0.9 M613.45 172.74 v0.9 M619.00 172.74 v0.9 M624.55 172.74 v0.9 M630.10 172.74 v0.9 M635.65 172.74 v0.9 M641.20 172.74 v0.9 M646.75 172.74 v0.9 M652.30 172.74 v0.9 M657.85 172.74 v0.9 M663.40 172.74 v0.9 M668.95 172.74 v0.9 M674.50 172.74 v0.9 M680.05 172.74 v0.9 M685.60 172.74 v0.9 M691.15 172.74 v0.9 M696.70 172.74 v0.9 M702.25 172.74 v0.9 M707.80 172.74 v0.9 M713.35 172.74 v0.9 M718.90 172.74 v0.9 M724.45 172.74 v0.9 M730.00 172.74 v0.9 M735.55 172.74 v0.9 M741.10 172.74 v0.9 M746.65 172.74 v0.9 M752.20 172.74 v0.9" stroke="#00a800" stroke-width="0.8"/>
<path d="M250.50 176.53 H377.50 V186.03 H386.50 V176.53 H395.85 V186.03 H404.85 V176.53 H414.20 V186.03 H423.20 V176.53 H432.55 V186.03 H441.55 V176.53 H450.90 V186.03 H459.90 V176.53 H469.25 V186.03 H478.25 V176.53 H487.60 V186.03 H496.60 V176.53 H505.95 V186.03 H514.95 V176.53 H524.30 V186.03 H533.30 V176.53 H542.65 V186.03 H551.65 V176.53 H561.00 V186.03 H570.00 V176.53 H579.35 V186.03 H588.35 V176.53 H753.80" fill="none" stroke="#00c400" stroke-width="1.0"/>
<path d="M251.00 176.53 V186.03" stroke="#00c400" stroke-width="0.8"/>
<path d="M250.50 198.82 H377.50 V189.32 H386.50 V198.82 H395.85 V189.32 H404.85 V198.82 H414.20 V189.32 H423.20 V198.82 H432.55 V189.32 H441.55 V198.82 H450.90 V189.32 H459.90 V198.82 H469.25 V189.32 H478.25 V198.82 H487.60 V189.32 H496.60 V198.82 H505.95 V189.32 H514.95 V198.82 H524.30 V189.32 H533.30 V198.82 H542.65 V189.32 H551.65 V198.82 H561.00 V189.32 H570.00 V198.82 H579.35 V189.32 H588.35 V198.82 H753.80" fill="none" stroke="#00c400" stroke-width="1.0"/>
<path d="M250.50 202.11 H369.40 V211.61 H579.30 V202.11 H753.80" fill="none" stroke="#00c400" stroke-width="1.0"/>
<path d="M251.00 202.11 V211.61" stroke="#00c400" stroke-width="0.8"/>
<path d="M250.50 224.40 H387.30 V214.90 H479.60 V224.40 H497.50 V214.90 H589.50 V224.40 H753.80" fill="none" stroke="#00c400" stroke-width="1.0"/>
<path d="M250.50 227.69 H378.20 V237.19 H389.30 V227.69 H487.50 V237.19 H500.00 V227.69 H753.80" fill="none" stroke="#00c400" stroke-width="1.0"/>
<path d="M251.00 227.69 V237.19" stroke="#00c400" stroke-width="0.8"/>
<path d="M250.50 240.48 H377.70 V249.98 H386.70 V240.48 H396.05 V249.98 H405.05 V240.48 H414.40 V249.98 H423.40 V240.48 H432.75 V249.98 H441.75 V240.48 H451.10 V249.98 H460.10 V240.48 H469.45 V249.98 H478.45 V240.48 H487.80 V249.98 H496.80 V240.48 H506.15 V249.98 H515.15 V240.48 H524.50 V249.98 H533.50 V240.48 H542.85 V249.98 H551.85 V240.48 H561.20 V249.98 H570.20 V240.48 H579.55 V249.98 H588.55 V240.48 H753.80" fill="none" stroke="#00c400" stroke-width="1.0"/>
<path d="M251.00 240.48 V249.98" stroke="#00c400" stroke-width="0.8"/>
<path d="M250.50 253.27 H377.70 V262.77 H386.70 V253.27 H396.05 V262.77 H405.05 V253.27 H414.40 V262.77 H423.40 V253.27 H432.75 V262.77 H441.75 V253.27 H451.10 V262.77 H460.10 V253.27 H469.45 V262.77 H478.45 V253.27 H487.80 V262.77 H496.80 V253.27 H506.15 V262.77 H515.15 V253.27 H524.50 V262.77 H533.50 V253.27 H542.85 V262.77 H551.85 V253.27 H561.20 V262.77 H570.20 V253.27 H579.55 V262.77 H588.55 V253.27 H753.80" fill="none" stroke="#00c400" stroke-width="1.0"/>
<path d="M251.00 253.27 V262.77" stroke="#00c400" stroke-width="0.8"/>
<path d="M250.50 266.06 H442.40 V275.56 H753.80" fill="none" stroke="#00c400" stroke-width="1.0"/>
<path d="M251.00 266.06 V275.56" stroke="#00c400" stroke-width="0.8"/>
<path d="M250.50 288.65 H443.10 V279.45 H753.80" fill="none" stroke="#00c400" stroke-width="1.0"/>
<path d="M250.50 301.44 H443.10 V292.24 H753.80" fill="none" stroke="#00c400" stroke-width="1.0"/>
<path d="M250.50 314.23 H443.10 V305.03 H753.80" fill="none" stroke="#00c400" stroke-width="1.0"/>
<path d="M250.50 327.02 H753.80" fill="none" stroke="#00c400" stroke-width="1.0"/>
<path d="M250.50 339.81 H443.10 V330.61 H753.80" fill="none" stroke="#00c400" stroke-width="1.0"/>
<path d="M250.50 352.60 H443.10 V343.40 H753.80" fill="none" stroke="#00c400" stroke-width="1.0"/>
<rect x="250.50" y="354.19" width="503.30" height="10.8" fill="#000"/>
<path d="M250.50 355.59 H485.80 L487.80 360.34 L485.80 365.09 H250.50 M487.80 360.34 L489.80 355.59 H753.80 M753.80 365.09 H489.80 L487.80 360.34" fill="none" stroke="#00ff00" stroke-width="1.4"/>
<text x="366.22 370.07" y="363.54" class="wt" text-anchor="middle">03</text>
<text x="617.87 621.72" y="363.54" class="wt" text-anchor="middle">05</text>
<rect x="490.2" y="359.6" width="2.6" height="2.6" fill="none" stroke="#ffffff" stroke-width="0.8"/>
<path d="M250.50 378.18 H753.80" fill="none" stroke="#00c400" stroke-width="1.0"/>
<path d="M250.50 84.4 H753.80" stroke="#cfcfcf" stroke-width="1"/>
<path d="M251.09 82.6 V84.4 M256.66 82.6 V84.4 M262.23 82.6 V84.4 M273.37 82.6 V84.4 M278.94 82.6 V84.4 M284.51 82.6 V84.4 M290.08 82.6 V84.4 M295.65 82.6 V84.4 M301.22 82.6 V84.4 M306.79 82.6 V84.4 M312.36 82.6 V84.4 M317.93 82.6 V84.4 M329.10 82.6 V84.4 M334.70 82.6 V84.4 M340.30 82.6 V84.4 M345.90 82.6 V84.4 M351.50 82.6 V84.4 M357.10 82.6 V84.4 M362.70 82.6 V84.4 M368.30 82.6 V84.4 M373.90 82.6 V84.4 M385.03 82.6 V84.4 M390.56 82.6 V84.4 M396.09 82.6 V84.4 M401.62 82.6 V84.4 M407.15 82.6 V84.4 M412.68 82.6 V84.4 M418.21 82.6 V84.4 M423.74 82.6 V84.4 M429.27 82.6 V84.4 M440.36 82.6 V84.4 M445.92 82.6 V84.4 M451.48 82.6 V84.4 M457.04 82.6 V84.4 M462.60 82.6 V84.4 M468.16 82.6 V84.4 M473.72 82.6 V84.4 M479.28 82.6 V84.4 M484.84 82.6 V84.4 M496.00 82.6 V84.4 M501.60 82.6 V84.4 M507.20 82.6 V84.4 M512.80 82.6 V84.4 M518.40 82.6 V84.4 M524.00 82.6 V84.4 M529.60 82.6 V84.4 M535.20 82.6 V84.4 M540.80 82.6 V84.4 M551.93 82.6 V84.4 M557.46 82.6 V84.4 M562.99 82.6 V84.4 M568.52 82.6 V84.4 M574.05 82.6 V84.4 M579.58 82.6 V84.4 M585.11 82.6 V84.4 M590.64 82.6 V84.4 M596.17 82.6 V84.4 M607.29 82.6 V84.4 M612.88 82.6 V84.4 M618.47 82.6 V84.4 M624.06 82.6 V84.4 M629.65 82.6 V84.4 M635.24 82.6 V84.4 M640.83 82.6 V84.4 M646.42 82.6 V84.4 M652.01 82.6 V84.4 M663.19 82.6 V84.4 M668.78 82.6 V84.4 M674.37 82.6 V84.4 M679.96 82.6 V84.4 M685.55 82.6 V84.4 M691.14 82.6 V84.4 M696.73 82.6 V84.4 M702.32 82.6 V84.4 M707.91 82.6 V84.4 M719.07 82.6 V84.4 M724.64 82.6 V84.4 M730.21 82.6 V84.4 M735.78 82.6 V84.4 M741.36 82.6 V84.4 M746.93 82.6 V84.4 M752.50 82.6 V84.4" stroke="#cfcfcf" stroke-width="0.9"/>
<text x="271.15 275.05 278.95 282.85 286.75 290.65 294.55 298.45 302.35" y="81.00" class="tl" text-anchor="middle">30,498 us</text>
<text x="326.85 330.75 334.65 338.55 342.45 346.35 350.25 354.15 358.05" y="81.00" class="tl" text-anchor="middle">30,500 us</text>
<text x="382.85 386.75 390.65 394.55 398.45 402.35 406.25 410.15 414.05" y="81.00" class="tl" text-anchor="middle">30,502 us</text>
<text x="438.15 442.05 445.95 449.85 453.75 457.65 461.55 465.45 469.35" y="81.00" class="tl" text-anchor="middle">30,504 us</text>
<text x="493.75 497.65 501.55 505.45 509.35 513.25 517.15 521.05 524.95" y="81.00" class="tl" text-anchor="middle">30,506 us</text>
<text x="549.75 553.65 557.55 561.45 565.35 569.25 573.15 577.05 580.95" y="81.00" class="tl" text-anchor="middle">30,508 us</text>
<text x="605.05 608.95 612.85 616.75 620.65 624.55 628.45 632.35 636.25" y="81.00" class="tl" text-anchor="middle">30,510 us</text>
<text x="660.95 664.85 668.75 672.65 676.55 680.45 684.35 688.25 692.15" y="81.00" class="tl" text-anchor="middle">30,512 us</text>
<text x="716.85 720.75 724.65 728.55 732.45 736.35 740.25 744.15 748.05" y="81.00" class="tl" text-anchor="middle">30,514 us</text>
<path d="M487.9 56 V387.2" stroke="#d6d000" stroke-width="1.5" opacity="0.82"/>
<rect x="488" y="55.6" width="64.4" height="7" fill="#ffff00"/>
<text x="490.55 494.45 498.35 502.25 506.15 510.05 513.95 517.85 521.75 525.65 529.55 533.45 537.35 541.25 545.15 549.05" y="61.40" class="tl" text-anchor="middle" style="fill:#000;stroke:#000;stroke-width:0.15px">30,505.905000 us</text>
<path d="M485.8 355.59 L489.8 365.09 M485.8 365.09 L489.8 355.59" stroke="#00ff00" stroke-width="1.3"/>
<path d="M250.50 387.2 H753.80" stroke="#d0d0d0" stroke-width="1"/>
</g>
</svg>
</body></html>
